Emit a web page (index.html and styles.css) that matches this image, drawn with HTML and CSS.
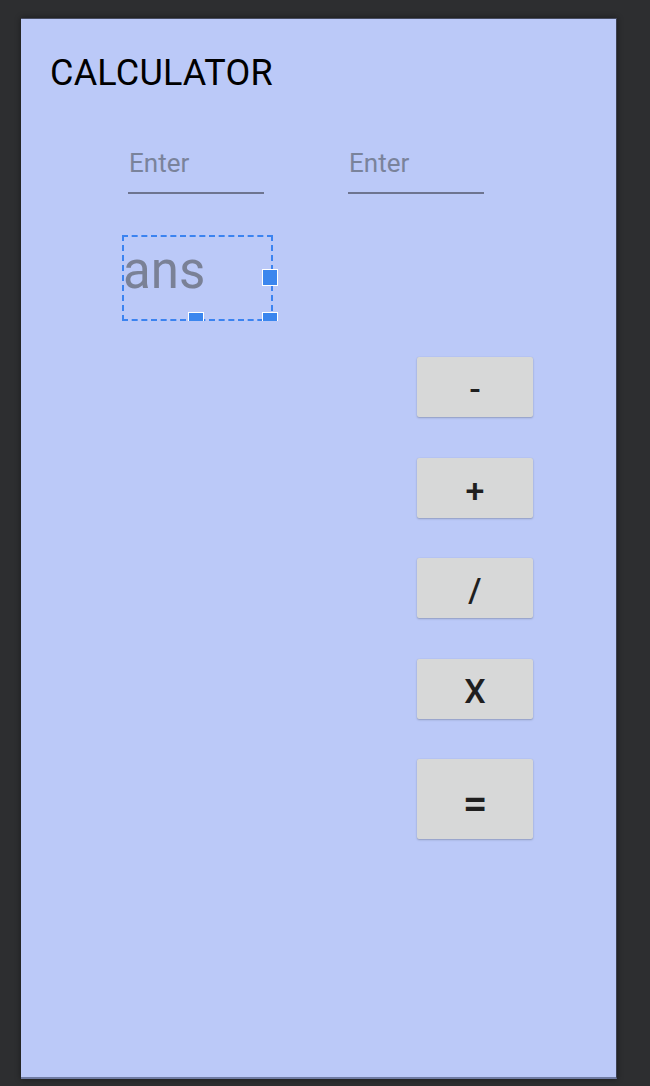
FILE: index.html
```html
<!DOCTYPE html>
<html lang="en">
<head>
<meta charset="utf-8">
<title>Calculator</title>
<link rel="stylesheet" href="styles.css">
</head>
<body>
<div class="screen">
  <div class="title">CALCULATOR</div>
  <div class="inputs">
    <div class="field">Enter</div>
    <div class="field">Enter</div>
  </div>
  <div class="ans-wrap">
    <div class="ans-box">
      <span class="ans">ans</span>
      <span class="handle h-right"></span>
      <span class="handle h-bottom"></span>
      <span class="handle h-corner"></span>
    </div>
  </div>
  <div class="buttons">
    <div class="btn">-</div>
    <div class="btn">+</div>
    <div class="btn">/</div>
    <div class="btn">X</div>
    <div class="btn btn-tall">=</div>
  </div>
</div>
</body>
</html>
```

FILE: styles.css
```css
html, body {
  margin: 0;
  padding: 0;
}
body {
  background: #2d2e30;
  height: 1086px;
  overflow: hidden;
  font-family: Roboto, "Noto Sans", sans-serif;
}
.screen {
  margin: 18px 0 0 21px;
  width: 596px;
  height: 1061px;
  box-sizing: border-box;
  background: #bbc9f8;
  border-top: 1px solid #474c60;
  border-right: 1px solid #3c4050;
  border-bottom: 2px solid #6f7ba2;
  box-shadow: 0 0 6px rgba(0, 0, 0, 0.45);
  padding-top: 37px;
  display: flex;
  flex-direction: column;
}
.title {
  margin-left: 29px;
  font-size: 36px;
  line-height: 36px;
  letter-spacing: 0.2px;
  color: #000;
  margin-top: -1px;
}
.inputs {
  margin-top: 59px;
  margin-left: 107px;
  display: flex;
  gap: 84px;
}
.field {
  width: 136px;
  box-sizing: border-box;
  padding: 0 0 16px 1px;
  font-size: 26px;
  line-height: 26px;
  color: #7a839b;
  border-bottom: 2px solid #6d7490;
}
.ans-wrap {
  margin-top: 41px;
  margin-left: 101px;
  width: 160px;
  height: 86px;
  overflow: hidden;
}
.ans-box {
  position: relative;
  width: 151px;
  height: 86px;
  box-sizing: border-box;
  border: 2px dashed #3b83f0;
  padding-top: 8px;
}
.ans {
  display: block;
  font-size: 51px;
  line-height: 51px;
  color: #7a8196;
  margin-left: -1px;
}
.handle {
  position: absolute;
  width: 14px;
  height: 15px;
  background: #3b86ee;
  border: 1px solid #ffffff;
}
.h-right {
  right: -7px;
  top: 32px;
}
.h-bottom {
  left: 64px;
  bottom: -10px;
}
.h-corner {
  right: -7px;
  bottom: -10px;
}
.buttons {
  margin-top: 36px;
  margin-left: 396px;
  display: flex;
  flex-direction: column;
  gap: 40.6px;
}
.btn {
  width: 116px;
  height: 60px;
  background: #d7d8d8;
  border-radius: 2px;
  box-shadow: 0 1px 2px rgba(0, 0, 0, 0.22), 0 0 1px rgba(0, 0, 0, 0.12);
  display: flex;
  align-items: center;
  justify-content: center;
  font-size: 34px;
  font-weight: 500;
  color: #1f1f1f;
  padding-top: 4px;
  box-sizing: border-box;
}
.btn-tall {
  height: 80px;
  padding-top: 10px;
  font-size: 44px;
}
```
